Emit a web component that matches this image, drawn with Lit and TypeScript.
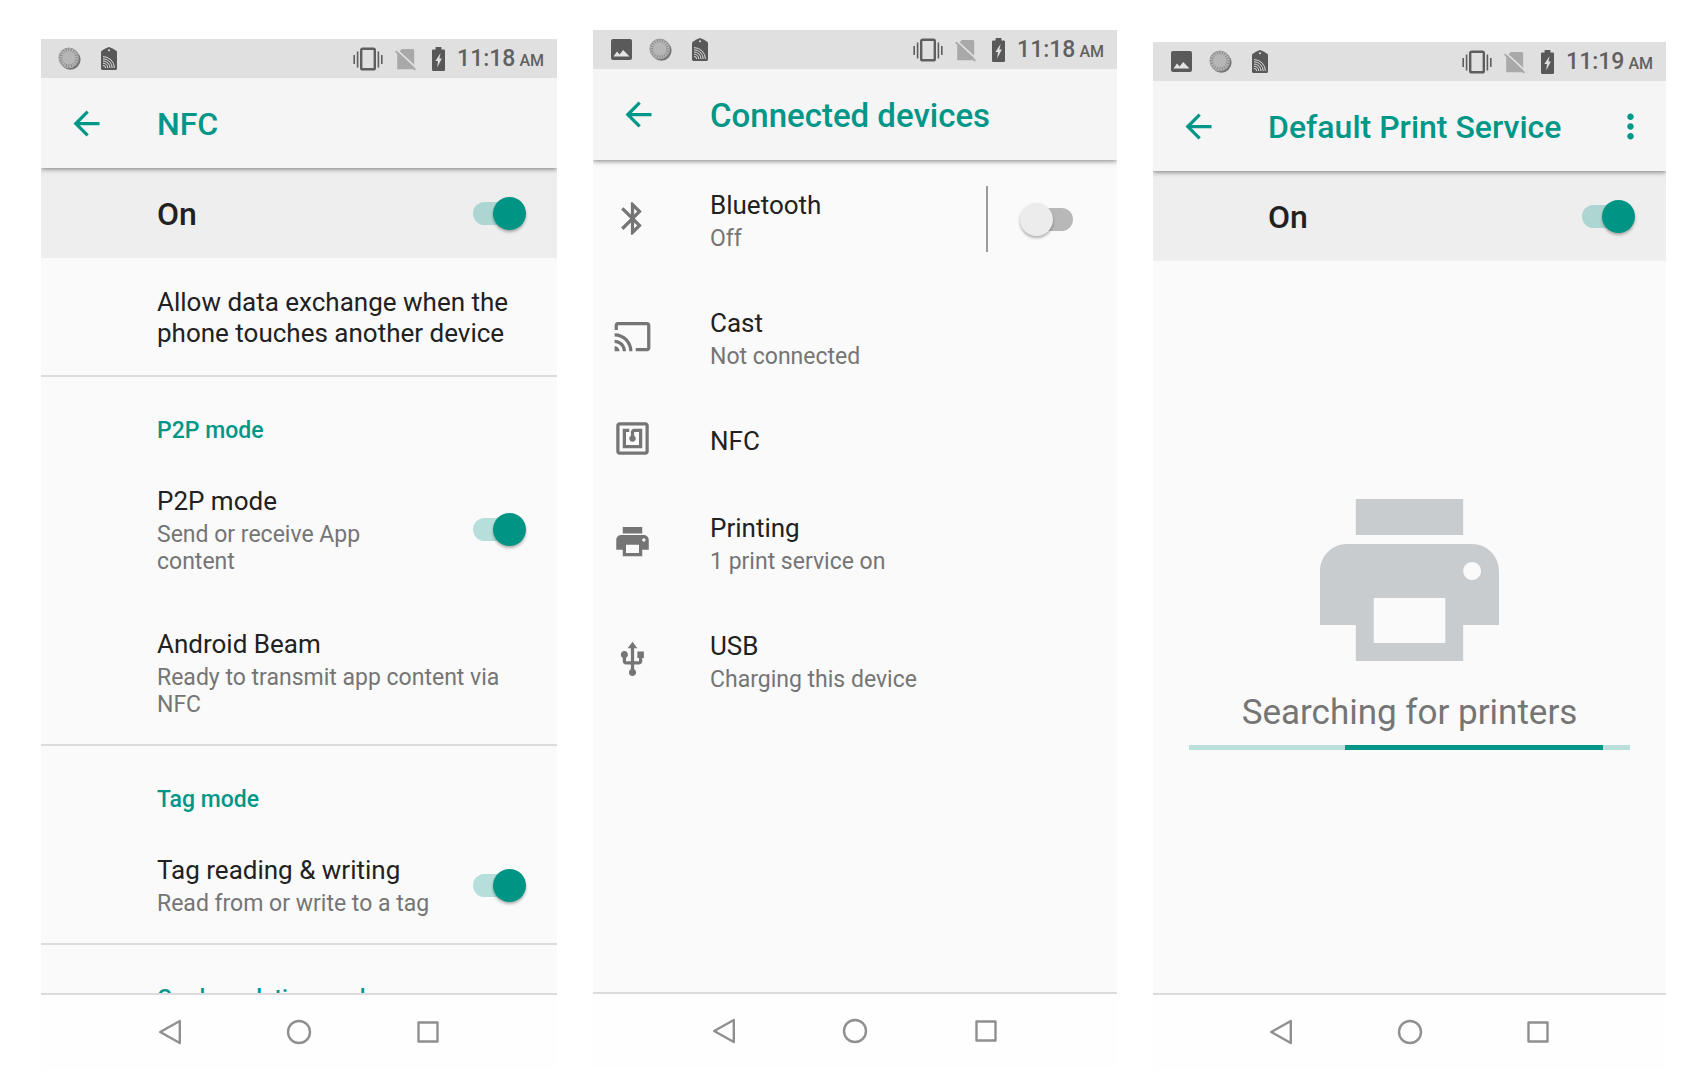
import { LitElement, html, svg, css, nothing, TemplateResult } from "lit";
import { customElement, state } from "lit/decorators.js";

interface Device {
  icon: TemplateResult;
  title: string;
  summary?: string;
}

const glyph = (d: string) => html`<svg class="glyph" viewBox="0 0 24 24" aria-hidden="true"><path d=${d}></path></svg>`;

const ARROW = "M20 11H7.83l5.59-5.59L12 4l-8 8 8 8 1.41-1.41L7.83 13H20v-2z";
const MORE = "M12 8c1.1 0 2-.9 2-2s-.9-2-2-2-2 .9-2 2 .9 2 2 2zm0 2c-1.1 0-2 .9-2 2s.9 2 2 2 2-.9 2-2-.9-2-2-2zm0 6c-1.1 0-2 .9-2 2s.9 2 2 2 2-.9 2-2-.9-2-2-2z";
const BLUETOOTH = "M17.71 7.71L12 2h-1v7.59L6.41 5 5 6.41 10.59 12 5 17.59 6.41 19 11 14.41V22h1l5.71-5.71-4.3-4.29 4.3-4.29zM13 5.83l1.88 1.88L13 9.59V5.83zm1.88 10.46L13 18.17v-3.76l1.88 1.88z";
const CAST = "M21 3H3c-1.1 0-2 .9-2 2v3h2V5h18v14h-7v2h7c1.1 0 2-.9 2-2V5c0-1.1-.9-2-2-2zM1 18v3h3c0-1.66-1.34-3-3-3zm0-4v2c2.76 0 5 2.24 5 5h2c0-3.87-3.13-7-7-7zm0-4v2c4.97 0 9 4.03 9 9h2c0-6.08-4.93-11-11-11z";
const NFC = "M20 2H4c-1.1 0-2 .9-2 2v16c0 1.1.9 2 2 2h16c1.1 0 2-.9 2-2V4c0-1.1-.9-2-2-2zm0 18H4V4h16v16zM18 6h-5c-1.1 0-2 .9-2 2v2.28c-.6.35-1 .98-1 1.72 0 1.1.9 2 2 2s2-.9 2-2c0-.74-.4-1.38-1-1.72V8h3v8H8V8h2V6H6v12h12V6z";
const PRINT = "M19 8H5c-1.66 0-3 1.34-3 3v6h4v4h12v-4h4v-6c0-1.66-1.34-3-3-3zm-3 11H8v-5h8v5zm3-7c-.55 0-1-.45-1-1s.45-1 1-1 1 .45 1 1-.45 1-1 1zm-1-9H6v4h12V3z";
const USB = "M15 7v4h1v2h-3V5h2l-3-4-3 4h2v8H8v-2.07c.7-.37 1.2-1.08 1.2-1.93 0-1.21-.99-2.2-2.2-2.2-1.21 0-2.2.99-2.2 2.2 0 .85.5 1.56 1.2 1.93V13c0 1.11.89 2 2 2h3v3.05c-.71.37-1.2 1.1-1.2 1.95 0 1.22.99 2.2 2.2 2.2 1.21 0 2.2-.98 2.2-2.2 0-.85-.49-1.58-1.2-1.95V15h3c1.11 0 2-.89 2-2v-2h1V7h-4z";

const pictureIcon = html`<svg class="s-picture" viewBox="0 0 21 21" aria-hidden="true">
  <rect width="21" height="21" rx="2" fill="#5a5a5a"></rect>
  <path d="M2.5 17.5 6 12.6l2.6 3L12.2 11l6.3 6.5z" fill="#e4e4e4"></path>
</svg>`;

const dialIcon = html`<svg class="s-dial" viewBox="0 0 23 23" aria-hidden="true">
  <circle cx="12.4" cy="12.6" r="10.2" fill="#747474"></circle>
  <circle cx="10.8" cy="10.8" r="10.4" fill="#a2a2a2"></circle>
  <circle cx="10.8" cy="10.8" r="9.4" fill="#b6b6b6"></circle>
  ${Array.from({ length: 20 }, (_, i) => svg`<path d="M10.8 1.2v3" stroke="#858585" stroke-width="0.9" transform="rotate(${i * 18} 10.8 10.8)"></path>`)}
</svg>`;

const tagIcon = html`<svg class="s-tag" viewBox="0 0 16 23" aria-hidden="true">
  <path d="M8 0 5 1.2.6 3.8 0 5v17l1 1h14l1-1V5l-.6-1.2L11 1.2z" fill="#585858"></path>
  <circle cx="8" cy="3.2" r="1" fill="#e0e0e0"></circle>
  <g fill="none" stroke="#dcdcdc" stroke-width="1">
    <path d="M2 18.4a2.6 2.6 0 0 1 2.6 2.6"></path>
    <path d="M2 16.2a4.8 4.8 0 0 1 4.8 4.8"></path>
    <path d="M2 14a7 7 0 0 1 7 7"></path>
    <path d="M2 11.8a9.2 9.2 0 0 1 9.2 9.2"></path>
    <path d="M2 9.6A11.4 11.4 0 0 1 13.4 21"></path>
  </g>
</svg>`;

const vibrateIcon = html`<svg class="s-vibrate" viewBox="0 0 30 24" aria-hidden="true">
  <g fill="none" stroke="#5e5e5e">
    <rect x="8.2" y="1.7" width="13.6" height="20.6" rx="1.4" stroke-width="2.4"></rect>
    <path d="M1.2 8v9M28.8 8v9M4.6 4.5v16M25.4 4.5v16" stroke-width="1.6"></path>
  </g>
</svg>`;

const noSimIcon = html`<svg class="s-sim" viewBox="0 0 22 24" aria-hidden="true">
  <path d="M7 2h10.6q1.6 0 1.6 1.6v18.6H2.2V6.6z" fill="#a9a9a9"></path>
  <path d="M1.8 2.8 21.6 21" stroke="#e0e0e0" stroke-width="1.8"></path>
  <path d="M.6 4.2 20.4 22.8" stroke="#a9a9a9" stroke-width="1.8"></path>
</svg>`;

const batteryIcon = html`<svg class="s-battery" viewBox="0 0 13 24" aria-hidden="true">
  <path d="M3.6 0h5.8v2.4h2.4q1.2 0 1.2 1.2v19.2q0 1.2-1.2 1.2H1.2Q0 24 0 22.8V3.6q0-1.2 1.2-1.2h2.4z" fill="#585858"></path>
  <path d="M8.6 6 3.4 14H6l-.8 6.400L9.8 11.600H7.400z" fill="#e0e0e0"></path>
</svg>`;

@customElement("app-root")
export class AppRoot extends LitElement {
  static styles = css`
    :host {
      display: block;
      --accent: #009688;
      font-family: Roboto, "Liberation Sans", sans-serif;
      color: #212121;
      background: #fff;
    }
    * {
      box-sizing: border-box;
    }
    h1, h2, p, ul {
      margin: 0;
      padding: 0;
      font-weight: inherit;
    }
    button {
      border: 0;
      padding: 0;
      background: none;
      font: inherit;
      cursor: pointer;
    }
    a {
      color: inherit;
      text-decoration: none;
    }
    .board {
      display: grid;
      grid-template-columns: 516fr 524fr 513fr;
      grid-template-rows: 100%;
      gap: 36px;
      height: 100vh;
      padding: 0 40px 0 41px;
    }
    .phone {
      display: flex;
      flex-direction: column;
      min-width: 0;
      padding: 39px 0 11px;
      --inset: 116px;
      --bar: 90px;
      --heading: 32px;
      --row-top: 28px;
      --row-bottom: 26px;
    }
    .phone.devices {
      padding: 30px 0 12px;
      --inset: 117px;
      --bar: 91px;
      --heading: 33px;
      --row-top: 30px;
      --row-bottom: 26px;
    }
    .phone.printer {
      padding: 42px 0 11px;
      --inset: 115px;
    }

    .status {
      flex: none;
      display: flex;
      align-items: center;
      justify-content: space-between;
      height: 39px;
      padding: 0 13px 0 9px;
      background: #e0e0e0;
      color: #606060;
    }
    .notices {
      display: flex;
    }
    .notice {
      display: grid;
      place-items: center;
      width: 39px;
    }
    .system {
      display: flex;
      align-items: center;
    }
    .s-picture { width: 21px; height: 21px; }
    .s-dial { width: 23px; height: 23px; }
    .s-tag { width: 16px; height: 23px; }
    .s-vibrate { width: 30px; height: 24px; margin-right: 12px; }
    .s-sim { width: 22px; height: 24px; margin-right: 15px; }
    .s-battery { width: 13px; height: 24px; margin-right: 12px; }
    .clock {
      padding-top: 2px;
      font-size: 23px;
      line-height: 27px;
      font-weight: 500;
    }
    .meridiem {
      font-size: 16px;
    }

    .appbar {
      flex: none;
      position: relative;
      z-index: 1;
      display: flex;
      align-items: center;
      height: var(--bar);
      background: #f5f5f5;
      color: var(--accent);
      box-shadow: 0 1px 5px rgba(0, 0, 0, 0.5);
      clip-path: inset(0 0 -12px 0);
    }
    .glyph {
      display: block;
      width: 39px;
      height: 39px;
      fill: currentColor;
    }
    .back {
      width: var(--inset);
      padding-left: 26px;
      color: inherit;
    }
    .more {
      margin: 0 16px 0 auto;
      color: inherit;
    }
    .heading {
      padding-top: 2px;
      font-size: var(--heading);
      line-height: 38px;
      font-weight: 500;
      white-space: nowrap;
    }
    .master {
      flex: none;
      display: flex;
      align-items: center;
      justify-content: space-between;
      height: 90px;
      padding: 0 31px 0 var(--inset);
      background: #eee;
    }

    .body {
      flex: 1;
      min-height: 0;
      overflow: hidden;
      background: #fafafa;
    }
    .body.center {
      display: flex;
      flex-direction: column;
      align-items: center;
      justify-content: center;
      padding: 0 36px 6px;
    }
    .note {
      padding: 29px 31px 26px var(--inset);
      font-size: 26px;
      line-height: 31px;
    }
    .group {
      border-top: 2px solid #dcdcdc;
    }
    .category {
      padding: 40px 31px 14px var(--inset);
      font-size: 23px;
      line-height: 27px;
      font-weight: 500;
      color: var(--accent);
    }
    .row {
      display: flex;
      align-items: center;
      padding-right: 31px;
    }
    .lead {
      flex: none;
      width: var(--inset);
      padding: 0 0 2px 20px;
      color: #757575;
    }
    .text {
      flex: 1;
      min-width: 0;
      padding: var(--row-top) 0 var(--row-bottom);
    }
    .title {
      display: block;
      font-size: 26px;
      line-height: 31px;
    }
    .summary {
      display: block;
      margin-top: 4px;
      font-size: 23px;
      line-height: 27px;
      color: #757575;
    }
    .row .switch {
      margin-left: 39px;
    }
    .row.split {
      padding-right: 44px;
    }
    .row.split .switch {
      margin-left: 0;
    }
    .divider {
      width: 2px;
      height: 66px;
      margin-right: 32px;
      background: #9c9c9c;
    }

    .switch {
      appearance: none;
      flex: none;
      position: relative;
      width: 53px;
      height: 33px;
      margin: 0;
      cursor: pointer;
    }
    .switch::before,
    .switch::after {
      content: "";
      position: absolute;
    }
    .switch::before {
      inset: 5px 0 5px 6px;
      border-radius: 12px;
      background: #b8b8b8;
    }
    .switch::after {
      left: 0;
      top: 0;
      width: 33px;
      height: 33px;
      border-radius: 50%;
      background: #ececec;
      box-shadow: 0 2px 3px rgba(0, 0, 0, 0.3);
    }
    .switch:checked::before {
      inset: 5px 6px 5px 0;
      background: rgba(0, 150, 136, 0.27);
    }
    .switch:checked::after {
      left: 20px;
      background: #009485;
    }

    .printer-art {
      width: 179px;
      height: 162px;
      fill: #c8cccf;
    }
    .searching {
      margin: 31px 0 11px;
      font-size: 35px;
      line-height: 42px;
      color: #757575;
      white-space: nowrap;
    }
    .progress {
      display: flex;
      width: 100%;
      height: 5px;
      background: #bbe0dc;
    }
    .progress-run {
      background: #009688;
    }

    .nav {
      flex: none;
      display: flex;
      height: 76px;
      padding: 0 12.5%;
      border-top: 2px solid #dcdcdc;
      background: #fefefe;
    }
    .nav-key {
      flex: 1;
      display: grid;
      place-items: center;
    }
    .nav-icon {
      display: block;
      width: 26px;
      height: 26px;
      fill: none;
      stroke: #8f8f8f;
      stroke-width: 2.4;
      stroke-linejoin: round;
    }
  `;

  @state() private on: Record<string, boolean> = {
    nfc: true,
    p2p: true,
    tag: true,
    bluetooth: false,
    print: true,
  };

  private devices: Device[] = [
    { icon: glyph(CAST), title: "Cast", summary: "Not connected" },
    { icon: glyph(NFC), title: "NFC" },
    { icon: glyph(PRINT), title: "Printing", summary: "1 print service on" },
    { icon: glyph(USB), title: "USB", summary: "Charging this device" },
  ];

  private search = { start: 35.4, length: 58.5 };

  private toggle(id: string) {
    return html`<input
      class="switch"
      type="checkbox"
      role="switch"
      id=${id}
      .checked=${this.on[id]}
      @change=${(e: Event) => {
        this.on = { ...this.on, [id]: (e.target as HTMLInputElement).checked };
      }}
    />`;
  }

  private status(time: string, picture: boolean) {
    return html`<div class="status">
      <div class="notices">
        ${picture ? html`<span class="notice">${pictureIcon}</span>` : nothing}
        <span class="notice">${dialIcon}</span>
        <span class="notice">${tagIcon}</span>
      </div>
      <div class="system">
        ${vibrateIcon}${noSimIcon}${batteryIcon}
        <span class="clock">${time}<span class="meridiem"> AM</span></span>
      </div>
    </div>`;
  }

  private appbar(title: string, menu = false) {
    return html`<header class="appbar">
      <button class="back" aria-label="Navigate up">${glyph(ARROW)}</button>
      <h1 class="heading">${title}</h1>
      ${menu ? html`<button class="more" aria-label="More options">${glyph(MORE)}</button>` : nothing}
    </header>`;
  }

  private master(id: string) {
    return html`<div class="master">
      <label class="heading" for=${id}>${this.on[id] ? "On" : "Off"}</label>
      ${this.toggle(id)}
    </div>`;
  }

  private lines(title: string, summary?: string) {
    return html`<span class="title">${title}</span>${summary ? html`<span class="summary">${summary}</span>` : nothing}`;
  }

  private switchRow(id: string, title: string, summary: string) {
    return html`<div class="row">
      <span class="lead"></span>
      <label class="text" for=${id}>${this.lines(title, summary)}</label>
      ${this.toggle(id)}
    </div>`;
  }

  private nav() {
    return html`<nav class="nav">
      <button class="nav-key" aria-label="Back">
        <svg class="nav-icon" viewBox="0 0 26 26"><path d="M22.800 2v22L3.200 13z"></path></svg>
      </button>
      <button class="nav-key" aria-label="Home">
        <svg class="nav-icon" viewBox="0 0 26 26"><circle cx="13" cy="13" r="11"></circle></svg>
      </button>
      <button class="nav-key" aria-label="Recent apps">
        <svg class="nav-icon" viewBox="0 0 26 26"><path d="M3.500 3.500h19v19h-19z"></path></svg>
      </button>
    </nav>`;
  }

  render() {
    return html`<main class="board">
      <section class="phone">
        ${this.status("11:18", false)} ${this.appbar("NFC")} ${this.master("nfc")}
        <div class="body">
          <p class="note">Allow data exchange when the phone touches another device</p>
          <div class="group">
            <h2 class="category">P2P mode</h2>
            ${this.switchRow("p2p", "P2P mode", "Send or receive App content")}
            <a class="row" href="#beam">
              <span class="lead"></span>
              <span class="text">${this.lines("Android Beam", "Ready to transmit app content via NFC")}</span>
            </a>
          </div>
          <div class="group">
            <h2 class="category">Tag mode</h2>
            ${this.switchRow("tag", "Tag reading & writing", "Read from or write to a tag")}
          </div>
          <div class="group">
            <h2 class="category">Card emulation mode</h2>
          </div>
        </div>
        ${this.nav()}
      </section>

      <section class="phone devices">
        ${this.status("11:18", true)} ${this.appbar("Connected devices")}
        <div class="body">
          <div class="row split">
            <span class="lead">${glyph(BLUETOOTH)}</span>
            <label class="text" for="bluetooth">${this.lines("Bluetooth", this.on.bluetooth ? "On" : "Off")}</label>
            <span class="divider"></span>
            ${this.toggle("bluetooth")}
          </div>
          ${this.devices.map(
            (d) => html`<a class="row" href="#${d.title.toLowerCase()}">
              <span class="lead">${d.icon}</span>
              <span class="text">${this.lines(d.title, d.summary)}</span>
            </a>`
          )}
        </div>
        ${this.nav()}
      </section>

      <section class="phone printer">
        ${this.status("11:19", true)} ${this.appbar("Default Print Service", true)} ${this.master("print")}
        <div class="body center">
          <svg class="printer-art" viewBox="2 3 20 18" preserveAspectRatio="none" aria-hidden="true"><path d=${PRINT}></path></svg>
          <p class="searching">Searching for printers</p>
          <div class="progress" role="progressbar" aria-label="Searching for printers">
            <span class="progress-run" style="margin-left:${this.search.start}%;width:${this.search.length}%"></span>
          </div>
        </div>
        ${this.nav()}
      </section>
    </main>`;
  }
}
